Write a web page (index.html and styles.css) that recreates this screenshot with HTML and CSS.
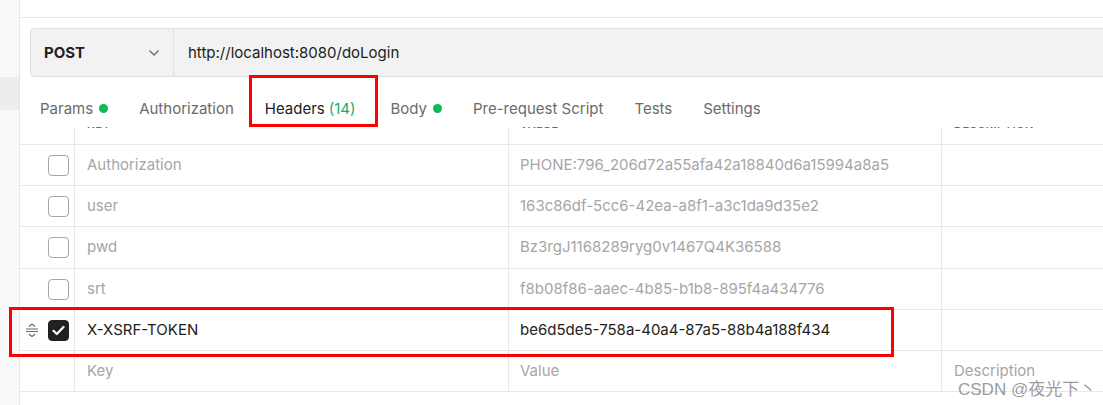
FILE: index.html
```html
<!DOCTYPE html>
<html>
<head>
<meta charset="utf-8">
<link rel="stylesheet" href="styles.css">
</head>
<body>
<div class="app">
  <div class="sidebar"><div class="side-sel"></div></div>
  <div class="main">
    <div class="topbar"></div>
    <div class="urlrow">
      <div class="urlbar">
        <div class="method"><span>POST</span>
          <svg class="chev" width="12" height="8" viewBox="0 0 12 8"><path d="M1.5 1.5 L6 6 L10.5 1.5" fill="none" stroke="#6b6b6b" stroke-width="1.3"/></svg>
        </div>
        <div class="url">http://localhost:8080/doLogin</div>
      </div>
    </div>
    <div class="tabs">
      <div class="tab">Params<span class="dot"></span></div>
      <div class="tab">Authorization</div>
      <div class="tab active">Headers <span class="count">(14)</span></div>
      <div class="tab body-tab">Body<span class="dot"></span></div>
      <div class="tab">Pre-request Script</div>
      <div class="tab">Tests</div>
      <div class="tab">Settings</div>
    </div>
    <div class="table">
      <div class="row head">
        <div class="c0"></div>
        <div class="c1"><span>KEY</span></div>
        <div class="c2"><span>VALUE</span></div>
        <div class="c3"><span>DESCRIPTION</span></div>
      </div>
      <div class="row off">
        <div class="c0"><span class="cb"></span></div>
        <div class="c1">Authorization</div>
        <div class="c2">PHONE:796_206d72a55afa42a18840d6a15994a8a5</div>
        <div class="c3"></div>
      </div>
      <div class="row off">
        <div class="c0"><span class="cb"></span></div>
        <div class="c1">user</div>
        <div class="c2">163c86df-5cc6-42ea-a8f1-a3c1da9d35e2</div>
        <div class="c3"></div>
      </div>
      <div class="row off r42">
        <div class="c0"><span class="cb"></span></div>
        <div class="c1">pwd</div>
        <div class="c2">Bz3rgJ1168289ryg0v1467Q4K36588</div>
        <div class="c3"></div>
      </div>
      <div class="row off">
        <div class="c0"><span class="cb"></span></div>
        <div class="c1">srt</div>
        <div class="c2">f8b08f86-aaec-4b85-b1b8-895f4a434776</div>
        <div class="c3"></div>
      </div>
      <div class="row on">
        <div class="c0">
          <svg class="drag" width="14" height="14" viewBox="0 0 14 14"><path d="M4 3.5 L7 1 L10 3.5 M1 6 H13 M1 8.5 H13 M4 11 L7 13.5 L10 11" fill="none" stroke="#6b6b6b" stroke-width="1.2"/></svg>
          <span class="cb checked"><svg width="13" height="11" viewBox="0 0 13 11"><path d="M1.5 5.8 L4.8 9 L11.5 2" fill="none" stroke="#fff" stroke-width="2.2" stroke-linecap="round" stroke-linejoin="round"/></svg></span>
        </div>
        <div class="c1">X-XSRF-TOKEN</div>
        <div class="c2">be6d5de5-758a-40a4-87a5-88b4a188f434</div>
        <div class="c3"></div>
      </div>
      <div class="row ph">
        <div class="c0"></div>
        <div class="c1">Key</div>
        <div class="c2">Value</div>
        <div class="c3">Description</div>
      </div>
    </div>
  </div>
</div>
<div class="mark mark-headers"></div>
<div class="mark mark-row"></div>
<div class="watermark">CSDN @夜光下丶</div>
</body>
</html>
```
FILE: styles.css
```css
html, body {
  margin: 0;
  padding: 0;
  background: #fff;
  font-family: Inter, "Noto Sans", sans-serif;
  overflow: hidden;
}
.app {
  display: flex;
  width: 1103px;
  height: 405px;
}
.sidebar {
  width: 19px;
  flex: none;
  background: #f9f9f9;
  border-right: 1px solid #e6e6e6;
}
.side-sel {
  margin-top: 77px;
  height: 33px;
  background: #ededed;
}
.main {
  flex: 1;
  min-width: 0;
  overflow: hidden;
}
.topbar {
  height: 17px;
  border-bottom: 1px solid #e8e8e8;
}
.urlrow {
  padding: 10px 0 0 10px;
}
.urlbar {
  display: flex;
  height: 47px;
  width: 1100px;
  background: #f2f2f2;
  border: 1px solid #e0e0e0;
  border-radius: 4px;
}
.method {
  width: 143px;
  flex: none;
  border-right: 1px solid #e0e0e0;
  display: flex;
  align-items: center;
  justify-content: space-between;
  padding: 0 13px 0 13px;
  box-sizing: border-box;
  font-weight: 700;
  font-size: 15px;
  color: #212121;
}
.chev { margin-top: 1px; }
.url {
  display: flex;
  align-items: center;
  padding-left: 14px;
  font-size: 15px;
  color: #212121;
}
.tabs {
  display: flex;
  align-items: center;
  gap: 31px;
  height: 50px;
  padding-left: 20px;
  padding-top: 1px;
  box-sizing: border-box;
}
.tab {
  font-size: 15px;
  color: #6b6b6b;
  display: flex;
  align-items: center;
  position: relative;
  height: 100%;
  padding-top: 11px;
  box-sizing: border-box;
}
.tab.active { color: #212121; padding-right: 2px; }
.tab.active::after {
  content: "";
  position: absolute;
  left: 0;
  right: 0;
  bottom: 0;
  height: 2px;
  background: #ff6c37;
}
.body-tab { margin-left: 2px; }
.count { color: #16ad6c; margin-left: 4px; }
.dot {
  width: 9px;
  height: 9px;
  border-radius: 50%;
  background: #0cbb52;
  margin-left: 6px;
  display: inline-block;
}
.table { font-size: 15px; }
.row {
  display: grid;
  grid-template-columns: 55px 434px 433px 1fr;
  height: 41px;
  border-bottom: 1px solid #e8e8e8;
  box-sizing: border-box;
}
.row.r42 { height: 42px; }
.row > div {
  display: flex;
  align-items: center;
  border-right: 1px solid #e8e8e8;
  box-sizing: border-box;
  white-space: nowrap;
}
.row > div:last-child { border-right: none; }
.row .c1 { padding-left: 12px; padding-bottom: 2px; }
.row .c2 { padding-left: 11px; padding-bottom: 2px; }
.row .c3 { padding-left: 12px; padding-bottom: 2px; }
.row.head { height: 18px; }
.row.head > div {
  overflow: hidden;
  align-items: flex-start;
  font-size: 11px;
  font-weight: 600;
  color: #6b6b6b;
  letter-spacing: 0.5px;
  padding-bottom: 0;
}
.row.head span { margin-top: -10px; }
.c0 {
  justify-content: flex-end;
  padding-right: 5px;
  gap: 9px;
}
.cb {
  width: 19px;
  height: 19px;
  border: 1px solid #a6a6a6;
  border-radius: 4px;
  display: inline-flex;
  align-items: center;
  justify-content: center;
  background: #fff;
}
.cb.checked {
  background: #212121;
  border-color: #212121;
}
.off { color: #a6a6a6; }
.on { color: #212121; }
.ph { color: #a6a6a6; }
.mark {
  position: absolute;
  border: 3px solid #ff0000;
  box-sizing: border-box;
  pointer-events: none;
}
.mark-headers {
  left: 249px;
  top: 75px;
  width: 129px;
  height: 52px;
}
.mark-row {
  left: 9px;
  top: 307px;
  width: 885px;
  height: 50px;
}
.watermark {
  position: absolute;
  left: 958px;
  top: 375px;
  font-family: "Liberation Sans", "Noto Sans CJK SC", sans-serif;
  font-size: 17px;
  color: rgba(120, 120, 120, 0.75);
}
```
